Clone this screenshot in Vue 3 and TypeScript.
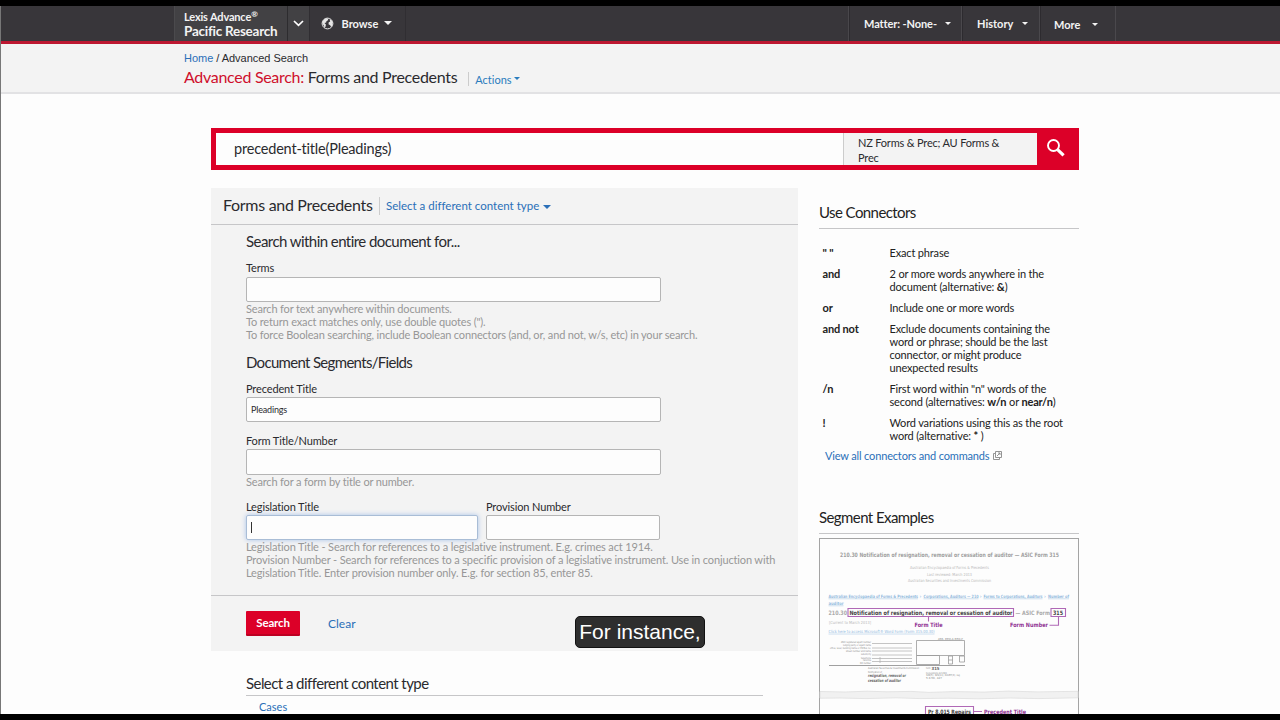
<script setup lang="ts">
interface Part { text: string; bold?: boolean }
interface Connector { key: string; lines: Part[][] }
interface Fine { x: number; y: number; w: number; text: string }

const connectors: Connector[] = [
  { key: '" "', lines: [[{ text: 'Exact phrase' }]] },
  { key: 'and', lines: [[{ text: '2 or more words anywhere in the' }], [{ text: 'document (alternative: ' }, { text: '&', bold: true }, { text: ')' }]] },
  { key: 'or', lines: [[{ text: 'Include one or more words' }]] },
  { key: 'and not', lines: [[{ text: 'Exclude documents containing the' }], [{ text: 'word or phrase; should be the last' }], [{ text: 'connector, or might produce' }], [{ text: 'unexpected results' }]] },
  { key: '/n', lines: [[{ text: 'First word within "n" words of the' }], [{ text: 'second (alternatives: ' }, { text: 'w/n', bold: true }, { text: ' or ' }, { text: 'near/n', bold: true }, { text: ')' }]] },
  { key: '!', lines: [[{ text: 'Word variations using this as the root' }], [{ text: 'word (alternative: ' }, { text: '*', bold: true }, { text: ' )' }]] },
]

const credits: Fine[] = [
  { x: 910, y: 569, w: 79, text: 'Australian Encyclopaedia of Forms & Precedents' },
  { x: 927, y: 575.5, w: 45, text: 'Last reviewed: March 2013' },
  { x: 908, y: 582, w: 83, text: 'Australian Securities and Investments Commission' },
  { x: 829, y: 623.5, w: 42, text: '[Current to March 2013]' },
]
const trail: Fine[] = [
  { x: 828.5, y: 597.7, w: 89.5, text: 'Australian Encyclopaedia of Forms & Precedents' },
  { x: 923.5, y: 597.7, w: 55, text: 'Corporations, Auditors — 210' },
  { x: 983.5, y: 597.7, w: 59, text: 'Forms to Corporations, Auditors' },
  { x: 1048, y: 597.7, w: 21, text: 'Number of' },
  { x: 828.5, y: 604.7, w: 15, text: 'auditor' },
]
const formRows: Fine[] = [
  { x: 841, y: 643, w: 30, text: 'ASIC registered agent number' },
  { x: 843, y: 646, w: 28, text: 'lodging party or agent name' },
  { x: 830, y: 649, w: 41, text: 'office, level, building name or PO Box no.' },
  { x: 846, y: 652, w: 25, text: 'street number and name' },
  { x: 861, y: 655, w: 10, text: 'suburb/city' },
  { x: 861, y: 658.6, w: 10, text: 'telephone' },
  { x: 863, y: 661.4, w: 8, text: 'facsimile' },
  { x: 860, y: 664.2, w: 11, text: 'DX number' },
  { x: 938, y: 640, w: 25, text: 'ASS. REQ-A REQ-P' },
  { x: 868, y: 669.3, w: 51, text: 'Australian Securities & Investments Commission' },
  { x: 868, y: 673.3, w: 14, text: 'Notification of' },
  { x: 926, y: 669.3, w: 4.5, text: 'form' },
  { x: 926, y: 673.6, w: 21, text: 'Corporations Act 2001' },
  { x: 926, y: 676.4, w: 34, text: '329(5), 329(11), 601BT(3), reg' },
  { x: 926, y: 679.2, w: 16, text: '5.6.56, 427' },
]
</script>

<template>
  <div class="screen">
    <header class="topbar">
      <div class="brand"><span class="brand-small">Lexis Advance<sup>®</sup></span><span class="brand-main">Pacific Research</span></div>
      <div class="brand-toggle">
        <svg width="11" height="7" viewBox="0 0 11 7"><path d="M1 1l4.500 4.300L10 1" fill="none" stroke="#fff" stroke-width="1.700" /></svg>
      </div>
      <div class="browse">
        <svg width="13" height="13" viewBox="0 0 13 13">
          <circle cx="6.500" cy="6.500" r="5.400" fill="none" stroke="#e6e6e6" stroke-width="1" />
          <path d="M1.500 4.200L3.800 1.700L6.600 1.300L7.300 3L5.400 4.200L5.200 5.600L3.500 6L4.900 7.600L4.600 9.600L3.700 10.900L2.700 8.400L1.300 6.300zM8.500 2.200L10.500 3.200L11.700 5.600L11.300 8.400L10.100 10L9.200 8.200L7.500 7.200L7.700 5.300L9.200 4.500z" fill="#e6e6e6" />
        </svg>
        <span>Browse</span><i class="caret big"></i>
      </div>
      <div class="spacer"></div>
      <div class="menu matter"><span>Matter: -None-</span><i class="caret"></i></div>
      <div class="menu history"><span>History</span><i class="caret"></i></div>
      <div class="menu more"><span>More</span><i class="caret"></i></div>
    </header>

    <div class="subheader">
      <div class="crumbs"><a>Home</a> / Advanced Search</div>
      <div class="title-row">
        <h1><em>Advanced Search:</em> Forms and Precedents</h1>
        <div class="actions"><span>Actions</span><i class="caret"></i></div>
      </div>
    </div>

    <main class="content">
      <div class="searchbar">
        <div class="query"><span>precedent-title(Pleadings)</span></div>
        <div class="scope">NZ Forms &amp; Prec; AU Forms &amp;<br />Prec</div>
        <div class="go">
          <svg width="20" height="20" viewBox="0 0 20 20"><circle cx="7.500" cy="7.500" r="5.500" fill="none" stroke="#fff" stroke-width="1.900" /><path d="M11.600 11.600L17.600 17.400" stroke="#fff" stroke-width="3.200" /></svg>
        </div>
      </div>

      <div class="columns">
        <div class="left">
          <section class="panel">
            <div class="panel-head">
              <h2>Forms and Precedents</h2>
              <div class="type-link"><span>Select a different content type</span><i class="caret big"></i></div>
            </div>
            <div class="panel-body">
              <h3>Search within entire document for...</h3>
              <label class="terms-label">Terms</label>
              <div class="input"></div>
              <p class="help">Search for text anywhere within documents.<br />To return exact matches only, use double quotes (").<br />To force Boolean searching, include Boolean connectors (and, or, and not, w/s, etc) in your search.</p>
              <h3 class="second">Document Segments/Fields</h3>
              <label>Precedent Title</label>
              <div class="input"><span>Pleadings</span></div>
              <label class="form-label">Form Title/Number</label>
              <div class="input tall"></div>
              <p class="help">Search for a form by title or number.</p>
              <div class="pair">
                <div class="legislation"><label>Legislation Title</label><div class="input focused"><b class="cursor"></b></div></div>
                <div class="provision"><label>Provision Number</label><div class="input"></div></div>
              </div>
              <p class="help notes">Legislation Title - Search for references to a legislative instrument. E.g. crimes act 1914.<br />Provision Number - Search for references to a specific provision of a legislative instrument. Use in conjuction with<br />Legislation Title. Enter provision number only. E.g. for section 85, enter 85.</p>
            </div>
            <div class="panel-foot"><div class="button">Search</div><a>Clear</a></div>
          </section>
          <section class="types">
            <h3>Select a different content type</h3>
            <a>Cases</a>
          </section>
        </div>

        <aside class="right">
          <h2>Use Connectors</h2>
          <dl>
            <div v-for="c in connectors" :key="c.key" class="connector">
              <dt>{{ c.key }}</dt>
              <dd><div v-for="(line, i) in c.lines" :key="i" class="line"><span v-for="(p, j) in line" :key="j" :class="{ strong: p.bold }">{{ p.text }}</span></div></dd>
            </div>
          </dl>
          <div class="all-link">
            <span>View all connectors and commands</span>
            <svg width="9" height="9" viewBox="0 0 9 9" fill="none" stroke="#888"><path d="M2.500 .5h6v6h-6zM2 2.500H.5v6h6V7M4 5l3-3M5 2h2v2" stroke-width=".9" /></svg>
          </div>
          <h2 class="examples">Segment Examples</h2>
          <svg class="figure" width="260" height="176" viewBox="819 538 260 176">
            <rect x="819.500" y="538.500" width="259" height="200" fill="#fdfdfd" stroke="#a4a4a4" />
            <path d="M820 691.500l25 .5 22-.8 20 .6 24-.4 18 1 25-.8 30 .5 24-1 30 .8 40-.6v6.500l-40 .8-28-.6-32 .8-30-.6-28 .4-24-.8-30 .8-26-.6-20 .2z" fill="#f1f1f1" stroke="#dedede" stroke-width=".8" />
            <g class="fig-text">
              <text x="840" y="557" textLength="219" lengthAdjust="spacingAndGlyphs" font-size="6" font-weight="700" fill="#a0a0a0">210.30 Notification of resignation, removal or cessation of auditor — ASIC Form 315</text>
              <text v-for="t in credits" :key="t.text" :x="t.x" :y="t.y" :textLength="t.w" lengthAdjust="spacingAndGlyphs" font-size="4" fill="#b8b8b8">{{ t.text }}</text>
              <text v-for="t in trail" :key="t.text" :x="t.x" :y="t.y" :textLength="t.w" lengthAdjust="spacingAndGlyphs" font-size="4.400" font-weight="700" text-decoration="underline" fill="#94bbdd">{{ t.text }}</text>
              <g fill="#8fb8dd" font-size="4.700"><text x="919.500" y="597.500">›</text><text x="979.800" y="597.500">›</text><text x="1044" y="597.500">›</text></g>
              <g font-size="6" font-weight="700">
                <text x="828.500" y="614.600" textLength="18.500" lengthAdjust="spacingAndGlyphs" fill="#aaa">210.30</text>
                <text x="849.500" y="614.600" textLength="163" lengthAdjust="spacingAndGlyphs" fill="#444">Notification of resignation, removal or cessation of auditor</text>
                <text x="1015.500" y="614.600" textLength="34.500" lengthAdjust="spacingAndGlyphs" fill="#aaa">— ASIC Form</text>
                <text x="1053" y="614.600" textLength="10" lengthAdjust="spacingAndGlyphs" fill="#444">315</text>
                <g fill="#913394">
                  <text x="914.500" y="627.300" textLength="28" lengthAdjust="spacingAndGlyphs">Form Title</text>
                  <text x="1010" y="627.300" textLength="38" lengthAdjust="spacingAndGlyphs">Form Number</text>
                  <text x="984" y="713.700" textLength="42" lengthAdjust="spacingAndGlyphs">Precedent Title</text>
                </g>
                <text x="928" y="713.700" textLength="43" lengthAdjust="spacingAndGlyphs" fill="#444">Pr 8.015 Repairs</text>
              </g>
              <text x="828.500" y="632.800" textLength="106" lengthAdjust="spacingAndGlyphs" font-size="4.200" fill="#8fb8dd" text-decoration="underline">Click here to access Microsoft® Word Form (Form 315.00.30)</text>
              <text v-for="t in formRows" :key="t.text" :x="t.x" :y="t.y" :textLength="t.w" lengthAdjust="spacingAndGlyphs" font-size="2.800" fill="#888">{{ t.text }}</text>
              <g fill="#666" font-size="4.200" font-weight="700">
                <text x="931.500" y="670" textLength="8" lengthAdjust="spacingAndGlyphs">315</text>
                <text x="868" y="677.300" textLength="38" lengthAdjust="spacingAndGlyphs" font-style="italic">resignation, removal or</text>
                <text x="868" y="682" textLength="33" lengthAdjust="spacingAndGlyphs" font-style="italic">cessation of auditor</text>
              </g>
            </g>
            <g fill="none" stroke="#b5b5b5" stroke-width=".8">
              <path d="M872 643.500h40M872 648h40M872 651h40M872 655h40M872 658.500h40M872 661.500h40M880 657v6" />
              <path d="M916.500 640.500h48v15h-48zM916.500 655.500h23v9h-23zM948.500 656h4v8h-4zM959.500 656h5v6h-5zM948.500 660h4" stroke="#999" />
              <path d="M829 665.500h136" stroke="#888" />
            </g>
            <path d="M848 608.500h165.500v8H848zM1051 608.500h14.500v8H1051zM928.500 617v4.500M1049.500 625.300h9v-8.500M925.500 714v-7.500h48v7.500M974 711.500h8" fill="none" stroke="#b068b6" stroke-width="1.100" />
          </svg>
        </aside>
      </div>
    </main>
    <div class="left-edge"></div>
    <div class="bottom-bar"></div>
    <div class="caption">For instance,</div>
  </div>
</template>

<style>
html, body { margin: 0; background: #000; overflow: hidden; }
</style>

<style scoped>
* { box-sizing: border-box; }
.screen { position: relative; width: 1280px; height: 720px; padding-top: 6px; overflow: hidden; background: #000; color: #2a2a2e; font-family: Lato, "Liberation Sans", sans-serif; font-size: 11px; line-height: 13px; letter-spacing: -.16px; white-space: nowrap; font-variant-ligatures: none; }
h1, h2, h3, p, dl, dd { margin: 0; font-weight: 400; }
a { color: #2a6fb8; }
i.caret { display: block; width: 0; height: 0; border: 3px solid transparent; border-top-color: currentColor; border-bottom: 0; }
i.caret.big { border-width: 4px 4px 0; }
.topbar { display: flex; height: 38px; padding-left: 174px; background: #38363a; border-bottom: 3px solid #bd1731; color: #f3f3f3; font-weight: 700; letter-spacing: 0; }
.brand { display: flex; flex-direction: column; width: 114px; padding: 4px 0 0 9px; background: #424144; border-left: 1px solid #4b4a4d; border-right: 1px solid #2d2c2f; line-height: 14px; }
.brand-small { height: 14px; font-size: 11px; letter-spacing: -.16px; }
.brand-small sup { font-size: 8px; line-height: 0; vertical-align: 4px; }
.brand-main { font-size: 13.500px; letter-spacing: -.25px; }
.brand-toggle { display: flex; width: 22px; align-items: center; justify-content: center; background: #424144; border-right: 1px solid #302e32; }
.browse { display: flex; align-items: center; width: 96px; padding-left: 11px; border-right: 1px solid #302e32; font-size: 11px; }
.browse span { margin: 0 6px 0 7.500px; }
.browse .caret { margin-top: -2px; }
.spacer { width: 443px; border-right: 1px solid #49474b; }
.menu { display: flex; align-items: center; border-left: 1px solid #2d2b2f; border-right: 1px solid #4a484c; }
.menu .caret { margin-top: -1px; }
.matter { width: 113px; padding-left: 14px; gap: 8px; letter-spacing: -.1px; }
.history { width: 78px; padding-left: 14px; gap: 9px; }
.more { width: 76px; padding: 1px 0 0 13px; gap: 12px; }
.more .caret { margin-top: 0; }
.subheader { height: 50px; padding: 7px 0 0 184px; background: #f3f3f3; border-bottom: 2px solid #e2e2e4; }
.crumbs { height: 14px; font: 11px/14px "Liberation Sans", Arial, sans-serif; letter-spacing: -.03px; }
.title-row { display: flex; align-items: center; height: 24px; }
h1 { font-size: 16px; line-height: 22px; letter-spacing: -.3px; }
h1 em { font-style: normal; color: #cf0f2c; }
.actions { display: flex; align-items: center; gap: 2px; margin: 4px 0 0 11px; padding-left: 6px; height: 14px; border-left: 1px solid #ccc; color: #2a7cbd; letter-spacing: 0; }
.actions .caret { margin-top: -2px; }
.content { height: 620px; padding: 34px 0 0 211px; background: #fdfdfd; overflow: hidden; }
.searchbar { display: flex; width: 868px; height: 42px; padding: 5px 0 5px 5px; background: #dc0028; }
.query { display: flex; align-items: center; width: 627px; padding: 0 0 1px 18px; background: #fdfdfd; font-size: 14.500px; letter-spacing: -.2px; }
.scope { width: 194px; padding: 2px 0 0 14px; background: #f3f3f3; border-left: 1px solid #ccc; line-height: 15px; letter-spacing: -.19px; }
.go { display: flex; width: 42px; padding: 5px 0 0 8.500px; }
.columns { display: flex; gap: 21px; margin-top: 18px; }
.left { width: 587px; }
.panel { height: 463px; background: #f3f3f3; }
.panel-head { display: flex; align-items: center; height: 37px; padding-left: 12px; border-bottom: 1px solid #c6c6c8; }
.panel-head h2 { font-size: 16px; line-height: 18px; width: 150px; letter-spacing: -.3px; margin-top: -3px; }
.type-link { display: flex; align-items: center; gap: 4px; height: 18px; margin-left: 6px; padding-left: 6px; border-left: 1px solid #ccc; color: #2a6fb8; font-size: 11.500px; letter-spacing: 0; }
.type-link span { margin-top: -1px; }
.type-link .caret { margin-top: 2px; }
.panel-body { height: 370px; padding: 7px 0 0 35px; }
h3 { height: 18px; font-size: 15px; line-height: 18px; letter-spacing: -.56px; }
label { display: block; height: 17px; padding-top: 1px; letter-spacing: -.13px; }
h3 + label { margin-top: 9px; padding-top: 2px; }
h3 + label.terms-label { margin-top: 10px; padding-top: 1px; }
.input { display: flex; align-items: center; width: 415px; height: 25px; padding-left: 4px; background: #fdfdfd; border: 1px solid #b5b5b5; border-radius: 2px; font-size: 9px; }
.input.tall { height: 26px; }
.help { color: #979797; }
.notes { letter-spacing: -.135px; }
h3.second { margin-top: 12px; letter-spacing: -.68px; }
label.form-label { margin-top: 10px; padding-top: 2px; }
.pair { display: flex; gap: 8px; margin-top: 10px; }
.pair label { padding-top: 2px; }
.legislation .input { width: 232px; }
.provision .input { width: 174px; }
.input.focused { border-color: #a9bdd6; box-shadow: 0 0 5px #a9c3ea; }
.cursor { width: 1px; height: 11px; background: #333; }
.panel-foot { display: flex; align-items: flex-start; height: 56px; padding: 15px 0 0 35px; border-top: 1px solid #c6c6c8; }
.button { width: 54px; height: 25px; background: #dc0028; border-bottom: 2px solid #bd0022; border-radius: 1px; color: #fff; font-size: 11.500px; font-weight: 700; line-height: 24px; text-align: center; }
.panel-foot a { margin: 6px 0 0 28px; font-size: 12px; letter-spacing: 0; }
.types { margin: 23px 0 0 35px; width: 517px; }
.types h3 { height: 22px; border-bottom: 1px solid #c6c6c8; }
.types a { display: block; margin: 4px 0 0 13px; letter-spacing: 0; }
.right { width: 260px; padding-top: 15px; color: #222; }
.right h2 { height: 26px; font-size: 15px; line-height: 18px; letter-spacing: -.58px; border-bottom: 1px solid #c6c6c8; }
.right dl { display: flex; flex-direction: column; gap: 8px; margin-top: 17px; }
.connector { display: flex; }
.connector dt { width: 70.500px; padding-left: 3.500px; font-weight: 700; }
.line { white-space: pre; }
.strong { font-weight: 700; }
.all-link { display: flex; align-items: center; gap: 4px; margin: 7px 0 0 6px; color: #2a6fb8; }
.right h2.examples { margin-top: 46px; }
.figure { display: block; margin-top: 4px; }
.fig-text { font-family: "DejaVu Sans", sans-serif; letter-spacing: 0; }
.left-edge { position: absolute; left: 0; top: 6px; width: 1px; height: 708px; background: #777; }
.bottom-bar { position: absolute; left: 0; bottom: 0; width: 1280px; height: 6px; background: #000; }
.caption { position: absolute; left: 575px; top: 616px; width: 130px; height: 32px; border: 1px solid #111; border-radius: 5px; background: #2e2e2e; color: #fff; font: 21px/30px "Liberation Sans", Arial, sans-serif; letter-spacing: 0; text-align: center; }
</style>
